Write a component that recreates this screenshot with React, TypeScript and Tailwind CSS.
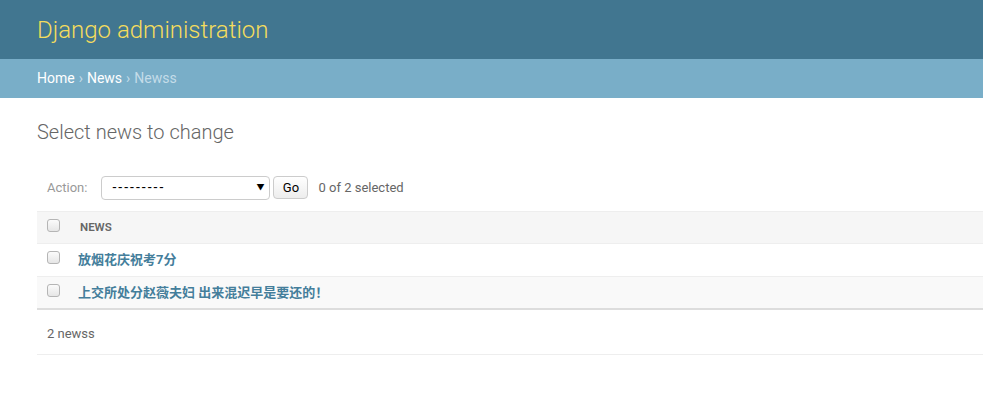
import React from 'react';

const rows = ['放烟花庆祝考7分', '上交所处分赵薇夫妇 出来混迟早是要还的！'];

const Box = () => (
  <span className="inline-block w-[13px] h-[13px] rounded-[3px] border border-[#b5b5b5] bg-gradient-to-b from-[#fbfbfb] to-[#e6e6e6]" />
);

export default function App() {
  return (
    <div className="min-h-[413px] bg-white font-['Roboto','Noto_Sans_CJK_SC',sans-serif] text-[#333]">
      {/* Header */}
      <div className="h-[59px] bg-[#417690] pl-[37px] flex items-center">
        <h1 className="text-[24px] font-light text-[#f5dd5d] leading-none">Django administration</h1>
      </div>
      <div className="h-[39px] bg-[#79aec8] pl-[37px] flex items-center text-[14px] text-white">
        <span>Home</span>
        <span className="text-[#c4dce8] mx-[4px]">›</span>
        <span>News</span>
        <span className="text-[#c4dce8] mx-[4px]">›</span>
        <span className="text-[#c4dce8]">Newss</span>
      </div>

      {/* Content */}
      <div className="pl-[37px] pt-[22px]">
        <h2 className="text-[20px] font-light text-[#666] leading-[24px]">Select news to change</h2>

        <div className="mt-[26px] flex items-center h-[35px] pl-[10px] text-[13px]">
          <span className="text-[#999] mr-[14px]">Action:</span>
          <div className="w-[169px] h-[24px] border border-[#ccc] rounded-[4px] bg-white flex items-center justify-between pl-[10px] pr-[5px] text-black">
            <span className="text-[14px] tracking-[2px]">---------</span>
            <span className="text-[8px]">▼</span>
          </div>
          <div className="ml-[3px] w-[35px] h-[23px] border border-[#ccc] rounded-[4px] bg-gradient-to-b from-white to-[#ededed] flex items-center justify-center text-[13px] text-black">
            Go
          </div>
          <span className="ml-[10px] text-[#666]">0 of 2 selected</span>
        </div>

        <div className="mt-[6px]">
          <div className="h-[33px] bg-[#f6f6f6] border-y border-[#eee] flex items-center">
            <div className="w-[43px] pl-[10px] flex items-center -mt-[5px]"><Box /></div>
            <span className="text-[11.5px] font-semibold text-[#666] uppercase">News</span>
          </div>
          {rows.map((r, i) => (
            <div
              key={r}
              className={`h-[33px] flex items-center ${i === 0 ? 'bg-white border-b border-[#eee]' : 'bg-[#f9f9f9] border-b-2 border-[#ddd]'}`}
            >
              <div className="w-[41px] pl-[10px] flex items-center -mt-[5px]"><Box /></div>
              <span className="text-[13px] font-bold text-[#447e9b]">{r}</span>
            </div>
          ))}
          <div className="h-[45px] flex items-center pl-[10px] pt-[3px] text-[13px] text-[#666] border-b border-[#eee]">2 newss</div>
        </div>
      </div>
    </div>
  );
}
